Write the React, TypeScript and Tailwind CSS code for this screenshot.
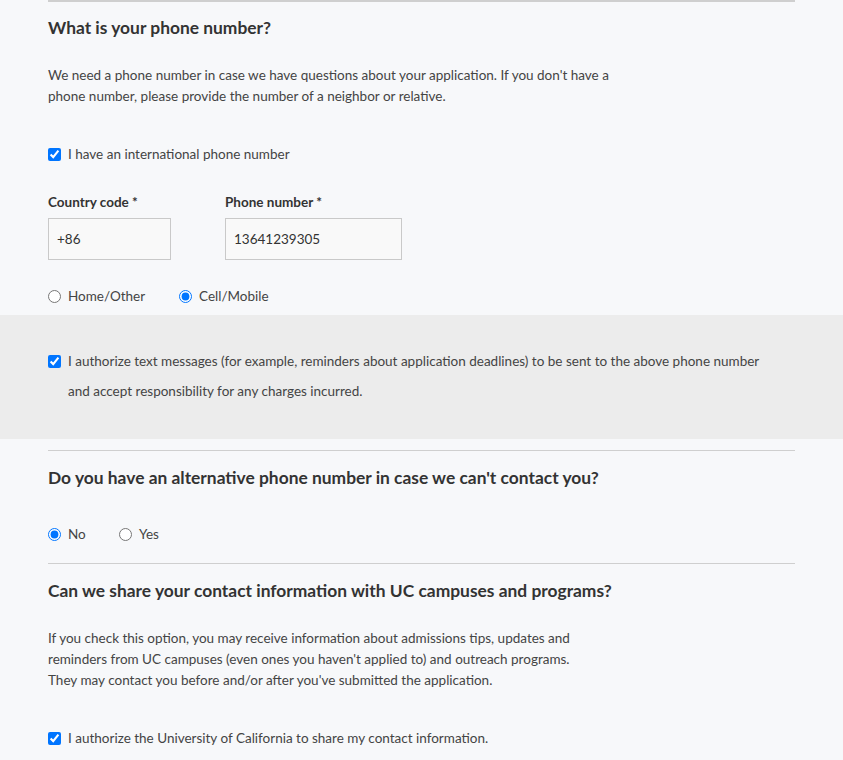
import React from "react";

function Check({ children }: { children: React.ReactNode }) {
  return (
    <label className="flex items-center h-[20px] text-[13.5px] text-[#444]">
      <input type="checkbox" defaultChecked className="m-0 w-[13px] h-[13px] accent-[#0075ff]" />
      <span className="ml-[7px]">{children}</span>
    </label>
  );
}

function Radio({ label, checked, name, className = "" }: { label: string; checked?: boolean; name: string; className?: string }) {
  return (
    <label className={"flex items-center h-[20px] text-[13.5px] text-[#444] " + className}>
      <input type="radio" name={name} defaultChecked={checked} className="m-0 w-[13px] h-[13px] accent-[#0075ff]" />
      <span className="ml-[7px]">{label}</span>
    </label>
  );
}

export default function App() {
  return (
    <div className="min-h-[760px] bg-[#f7f8fa] pb-8" style={{ fontFamily: "Lato, 'Liberation Sans', sans-serif" }}>
      <div className="px-[48px]">
        <div className="h-[2px] bg-[#cfcfcf]" />
        <h2 className="mt-[14px] text-[17.4px] leading-[24px] font-bold text-[#333]">What is your phone number?</h2>
        <p className="mt-[25px] text-[13.5px] leading-[21px] text-[#444] w-[565px]">
          We need a phone number in case we have questions about your application. If you don't have a phone number, please provide the number of a neighbor or relative.
        </p>
        <div className="mt-[37px]">
          <Check>I have an international phone number</Check>
        </div>
        <div className="mt-[29px] flex">
          <div className="w-[177px]">
            <div className="text-[13.5px] leading-[18px] font-bold text-[#333]">Country code *</div>
            <input readOnly value="+86" className="mt-[7px] w-[123px] h-[42px] border border-[#c9c9c9] bg-[#f9f9f9] px-[8px] text-[13.5px] text-[#333] outline-none" />
          </div>
          <div>
            <div className="text-[13.5px] leading-[18px] font-bold text-[#333]">Phone number *</div>
            <input readOnly value="13641239305" className="mt-[7px] w-[177px] h-[42px] border border-[#c9c9c9] bg-[#f9f9f9] px-[8px] text-[13.5px] text-[#333] outline-none" />
          </div>
        </div>
        <div className="mt-[26px] flex">
          <Radio name="ptype" label="Home/Other" className="w-[131px]" />
          <Radio name="ptype" label="Cell/Mobile" checked />
        </div>
      </div>
      <div className="mt-[9px] bg-[#ececec] h-[124px] pt-[31px] px-[48px]">
        <div className="flex items-start text-[13.5px] leading-[30px] text-[#444]">
          <input type="checkbox" defaultChecked className="mt-[9px] w-[13px] h-[13px] accent-[#0075ff] shrink-0" />
          <span className="ml-[7px] w-[710px]">
            I authorize text messages (for example, reminders about application deadlines) to be sent to the above phone number and accept responsibility for any charges incurred.
          </span>
        </div>
      </div>
      <div className="px-[48px]">
        <div className="mt-[11px] h-px bg-[#cfcfcf]" />
        <h2 className="mt-[15px] text-[17.4px] leading-[24px] font-bold text-[#333]">Do you have an alternative phone number in case we can't contact you?</h2>
        <div className="mt-[34px] flex">
          <Radio name="alt" label="No" checked className="w-[71px]" />
          <Radio name="alt" label="Yes" />
        </div>
        <div className="mt-[19px] h-px bg-[#cfcfcf]" />
        <h2 className="mt-[15px] text-[17.4px] leading-[24px] font-bold text-[#333]">Can we share your contact information with UC campuses and programs?</h2>
        <p className="mt-[25px] text-[13.5px] leading-[21px] text-[#444] w-[535px]">
          If you check this option, you may receive information about admissions tips, updates and reminders from UC campuses (even ones you haven't applied to) and outreach programs. They may contact you before and/or after you've submitted the application.
        </p>
        <div className="mt-[37px]">
          <Check>I authorize the University of California to share my contact information.</Check>
        </div>
      </div>
    </div>
  );
}
